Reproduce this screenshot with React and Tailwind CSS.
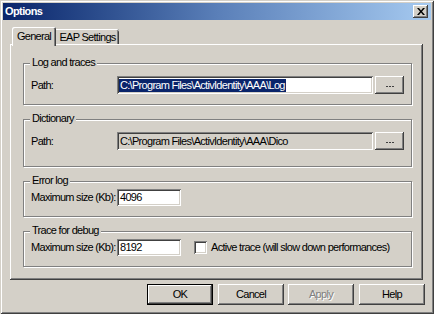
import React from "react";

const raised =
  "shadow-[inset_-1px_-1px_0_#404040,inset_1px_1px_0_#ffffff,inset_-2px_-2px_0_#808080]";
const sunken =
  "shadow-[inset_1px_1px_0_#808080,inset_-1px_-1px_0_#ffffff,inset_2px_2px_0_#404040,inset_-2px_-2px_0_#d4d0c8]";

function Group({ label, h, mt, children }) {
  return (
    <div
      className={`${h} ${mt} w-[389px] ml-[13px] border border-[#808080] shadow-[inset_1px_1px_0_#ffffff,1px_1px_0_#ffffff]`}
    >
      <div className="-mt-[8px] ml-[6px] w-fit px-[2px] bg-[#d4d0c8] leading-[13px] h-[13px]">
        {label}
      </div>
      {children}
    </div>
  );
}

function Btn({ children, className = "", disabled, isDefault }) {
  if (isDefault) {
    return (
      <div className={`w-[66px] h-[21px] border border-black ${className}`}>
        <div className={`w-full h-full flex items-center justify-center ${raised}`}>
          {children}
        </div>
      </div>
    );
  }
  return (
    <div
      className={`w-[66px] h-[21px] flex items-center justify-center ${raised} ${className} ${
        disabled ? "text-[#808080] [text-shadow:1px_1px_0_#ffffff]" : ""
      }`}
    >
      {children}
    </div>
  );
}

function Dots() {
  return (
    <div className={`ml-[2px] w-[29px] h-[18px] flex items-center justify-center gap-[1px] pt-[3px] ${raised}`}>
      <span className="w-[2px] h-[1px] bg-[#404040]" />
      <span className="w-[2px] h-[1px] bg-[#404040]" />
      <span className="w-[2px] h-[1px] bg-[#404040]" />
    </div>
  );
}

export default function App() {
  return (
    <div className="w-[434px] h-[314px] bg-[#d4d0c8] p-[3px] text-[11px] tracking-[-0.7px] text-black font-['Liberation_Sans',Arial,sans-serif] shadow-[inset_1px_1px_0_#d4d0c8,inset_-1px_-1px_0_#404040,inset_2px_2px_0_#ffffff,inset_-2px_-2px_0_#808080] overflow-hidden">
      {/* Title bar */}
      <div className="h-[17px] flex items-center pl-[2px] pr-[3px] bg-gradient-to-r from-[#0a246a] via-[#5a7fb8] to-[#a6caf0]">
        <span className="text-white font-bold text-[11px] tracking-[-0.6px] leading-none">
          Options
        </span>
        <div className={`ml-auto w-[15px] h-[13px] bg-[#d4d0c8] flex items-center justify-center ${raised}`}>
          <svg width="8" height="7" viewBox="0 0 8 7">
            <path d="M0 0h2l2 2.5L6 0h2L5 3.5 8 7H6L4 4.5 2 7H0l3-3.5z" fill="#000" />
          </svg>
        </div>
      </div>

      <div className="pl-[7px]">
        {/* Tabs */}
        <div className="flex items-end pl-[2px] mt-[6px] h-[18px]">
          <div className="relative z-10 w-[44px] h-[19px] -mb-[2px] bg-[#d4d0c8] rounded-tl-[2px] rounded-tr-[2px] shadow-[inset_1px_1px_0_#ffffff,inset_-1px_0_0_#404040,inset_-2px_0_0_#808080] flex justify-center pt-[3px] leading-[13px]">
            General
          </div>
          <div className="w-[63px] h-[15px] rounded-tr-[2px] shadow-[inset_0_1px_0_#ffffff,inset_-1px_0_0_#404040,inset_-2px_0_0_#808080] flex justify-center pt-[2px] leading-[13px]">
            EAP Settings
          </div>
        </div>

        {/* Panel */}
        <div className={`relative w-[413px] h-[236px] pt-[19px] ${raised}`}>
          <Group label="Log and traces" h="h-[42px]" mt="mt-0">
            <div className="flex items-center mt-[7px] h-[18px] pl-[7px]">
              <span className="w-[86px]">Path:</span>
              <div className={`w-[256px] h-[18px] bg-white pl-[2px] flex items-center ${sunken}`}>
                <span className="bg-[#0a246a] text-white leading-[13px] pl-[1px] pr-[1px]">
                  C:\Program Files\ActivIdentity\AAA\Log
                </span>
              </div>
              <Dots />
            </div>
          </Group>

          <Group label="Dictionary" h="h-[48px]" mt="mt-[14px]">
            <div className="flex items-center mt-[7px] h-[18px] pl-[7px]">
              <span className="w-[86px]">Path:</span>
              <div className={`w-[256px] h-[18px] bg-[#d4d0c8] pl-[3px] flex items-center ${sunken}`}>
                C:\Program Files\ActivIdentity\AAA\Dico
              </div>
              <Dots />
            </div>
          </Group>

          <Group label="Error log" h="h-[36px]" mt="mt-[14px]">
            <div className="flex items-center mt-[2px] h-[17px] pl-[7px]">
              <span className="w-[86px]">Maximum size (Kb):</span>
              <div className={`w-[64px] h-[17px] bg-white pl-[3px] flex items-center ${sunken}`}>
                4096
              </div>
            </div>
          </Group>

          <Group label="Trace for debug" h="h-[36px]" mt="mt-[14px]">
            <div className="flex items-center mt-[2px] h-[17px] pl-[7px]">
              <span className="w-[86px]">Maximum size (Kb):</span>
              <div className={`w-[64px] h-[17px] bg-white pl-[3px] flex items-center ${sunken}`}>
                8192
              </div>
              <div className={`ml-[13px] w-[13px] h-[13px] bg-white ${sunken}`} />
              <span className="ml-[4px]">Active trace (will slow down performances)</span>
            </div>
          </Group>
        </div>

        {/* Buttons */}
        <div className="flex mt-[4px] pl-[137px]">
          <Btn isDefault>OK</Btn>
          <Btn className="ml-[5px]">Cancel</Btn>
          <Btn className="ml-[4px]" disabled>Apply</Btn>
          <Btn className="ml-[5px]">Help</Btn>
        </div>
      </div>
    </div>
  );
}
